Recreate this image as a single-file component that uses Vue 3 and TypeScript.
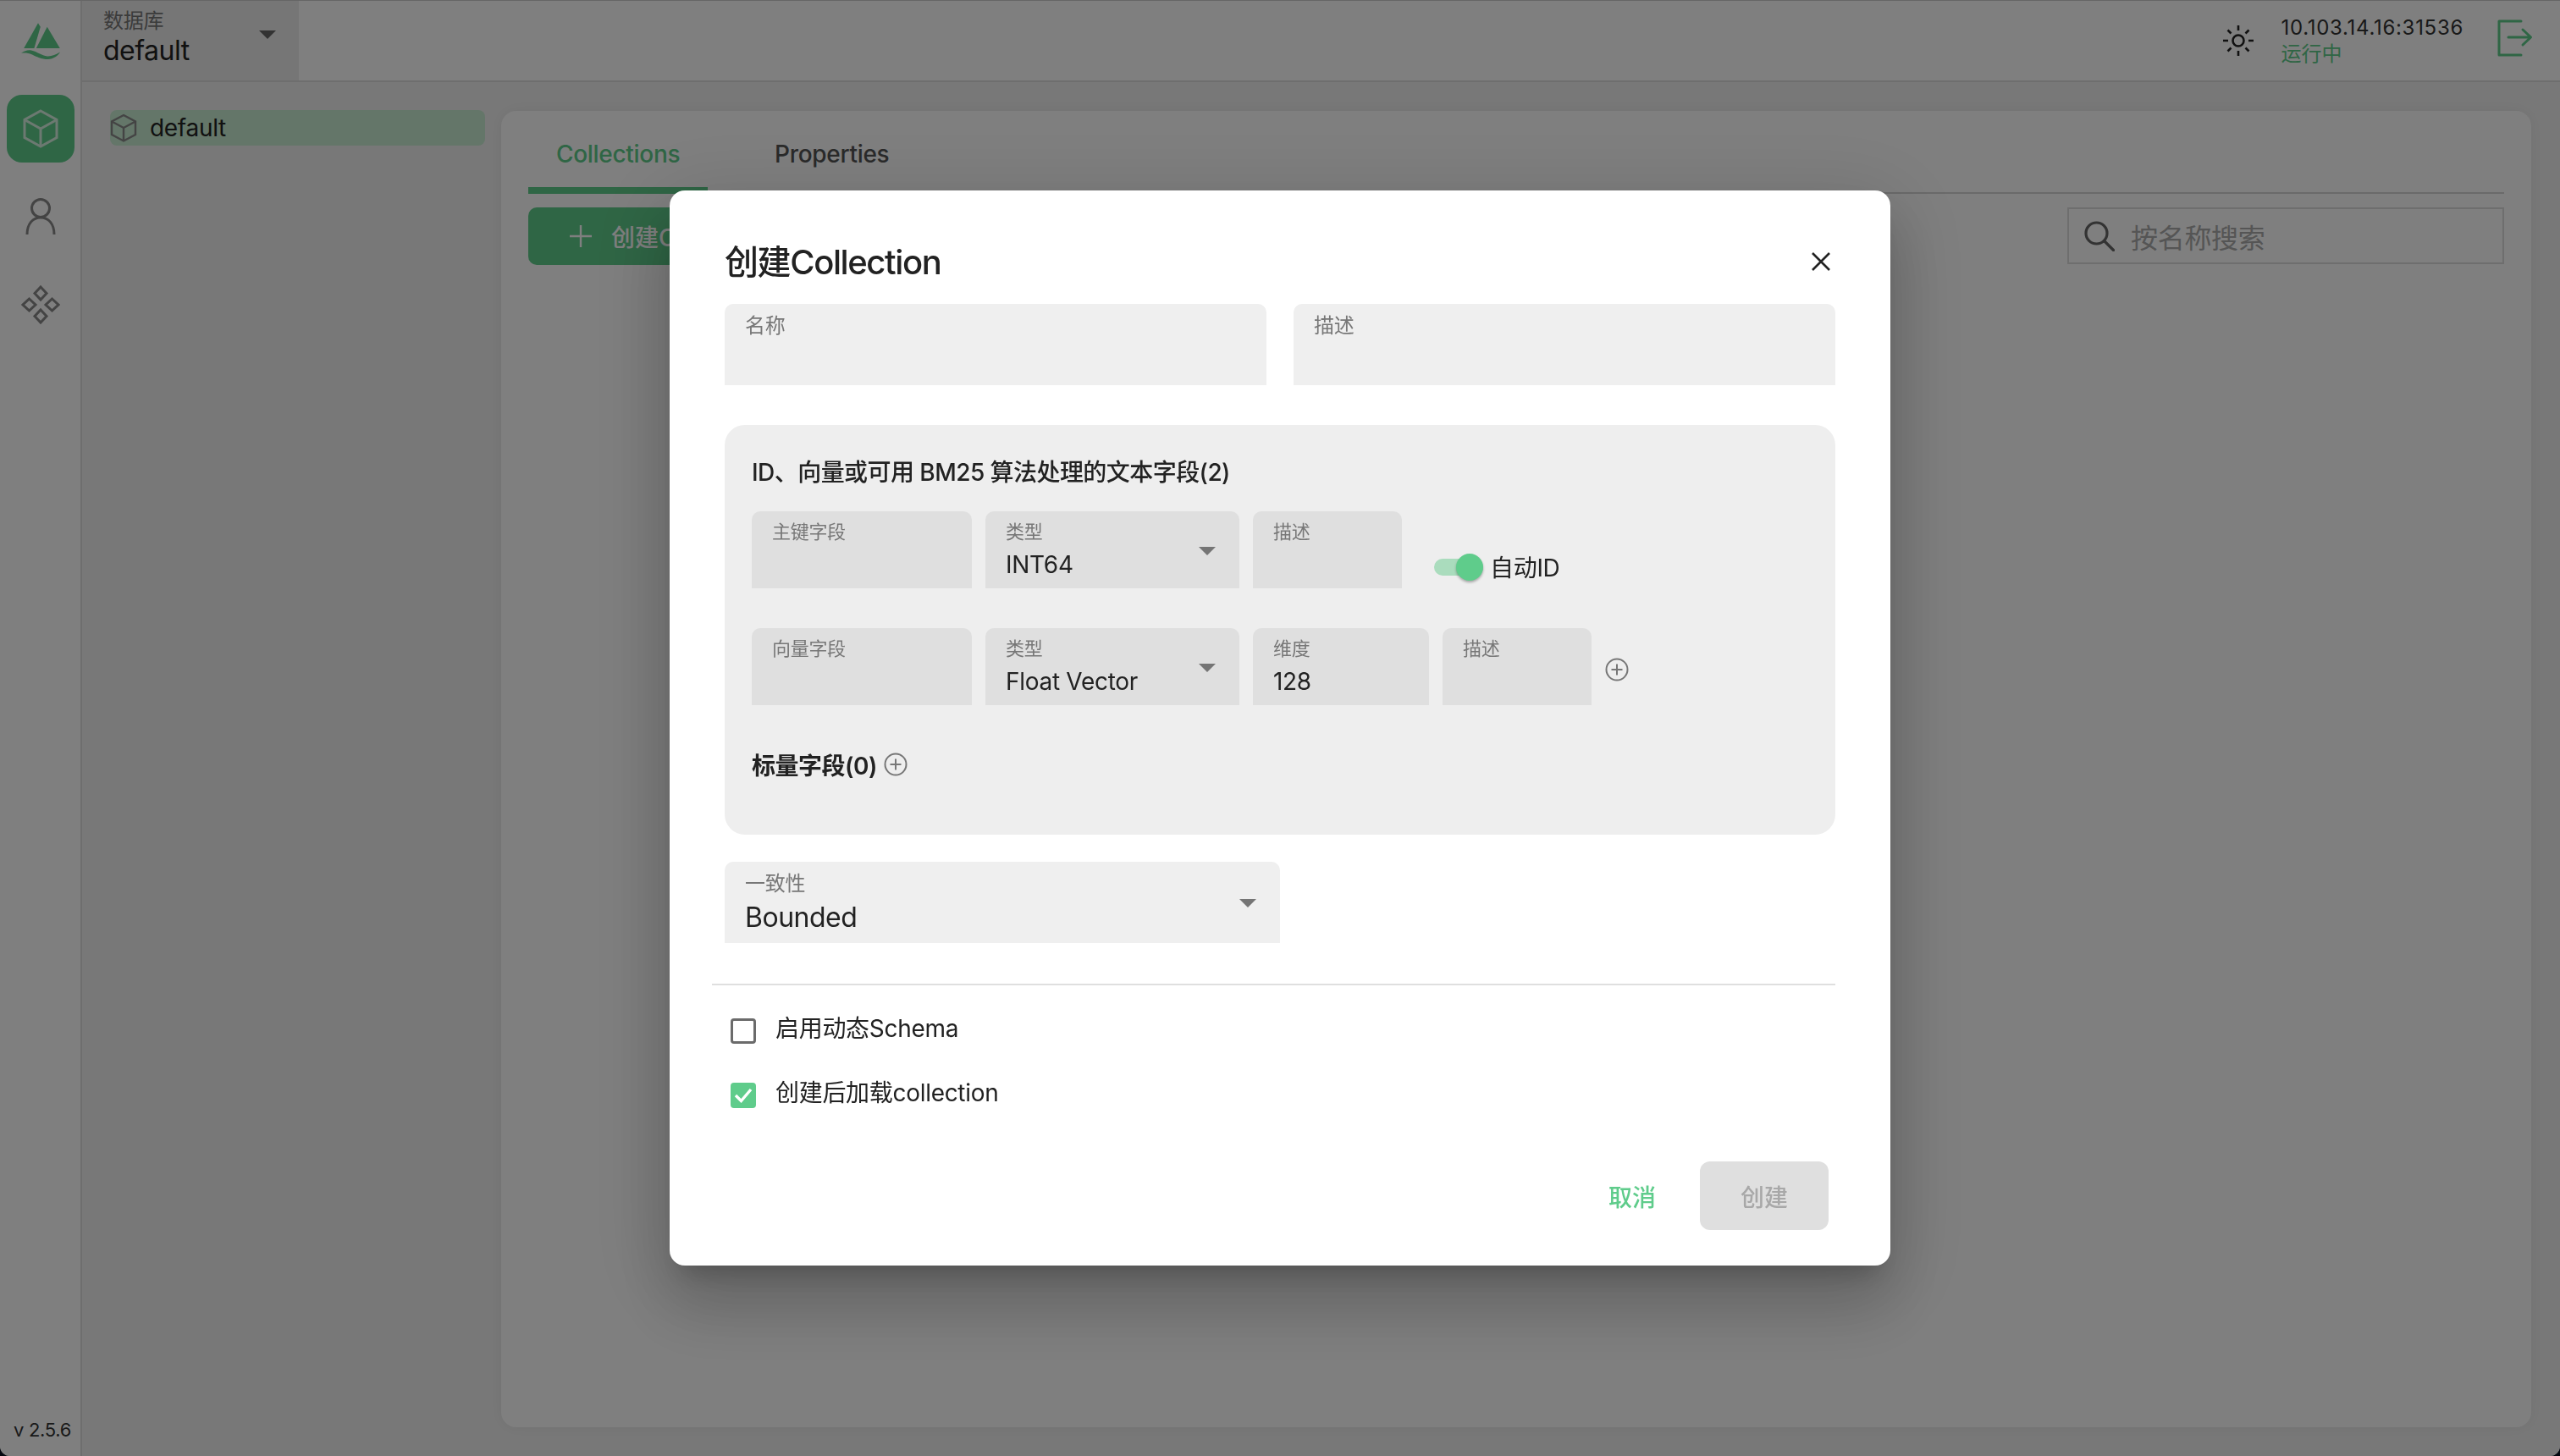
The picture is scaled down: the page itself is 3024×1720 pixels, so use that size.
<script setup lang="ts">
interface Field {
  label: string;
  value?: string;
  select?: boolean;
  cls: string;
}

const navItems = ['cube', 'user', 'diamonds'];

const pkRow: Field[] = [
  { label: '主键字段', cls: 'w-name' },
  { label: '类型', value: 'INT64', select: true, cls: 'w-type' },
  { label: '描述', cls: 'w-desc' },
];

const vectorRow: Field[] = [
  { label: '向量字段', cls: 'w-name' },
  { label: '类型', value: 'Float Vector', select: true, cls: 'w-type' },
  { label: '维度', value: '128', cls: 'w-dim' },
  { label: '描述', cls: 'w-desc' },
];
</script>

<template>
  <div class="app">
    <aside class="rail">
      <svg class="logo" viewBox="24 26 48 45">
        <path d="M45 27.3 L47.8 31.8 L40.4 57 H28.2 Z" />
        <path d="M55.7 31.7 L70.8 57 H42.8 Z" />
        <path d="M25 62.8 C29 60 33 58.8 37 59.6 C44 61 49 66 56 66.4 C61 66.6 66 65 71 61.6 C69 65.6 63 70 56.7 70 C49 70 43 66.8 38 64.4 C33 62.4 29 62.2 25 62.8 Z" />
      </svg>
      <nav class="nav">
        <div v-for="item in navItems" :key="item" class="nav-item" :class="{ active: item === 'cube' }">
          <svg v-if="item === 'cube'" width="46" height="46" viewBox="0 0 46 46" fill="none" stroke="currentColor" stroke-width="3">
            <path d="M23 2 L42 12.5 V33.5 L23 44 L4 33.5 V12.5 Z" />
            <path d="M4 12.5 L23 23 L42 12.5 M23 23 V44" />
          </svg>
          <svg v-else-if="item === 'user'" width="36" height="44" viewBox="0 0 36 44" fill="none" stroke="currentColor" stroke-width="3">
            <circle cx="18" cy="12" r="10.5" />
            <path d="M2 43 C2 30 9 23 18 23 C27 23 34 30 34 43" />
          </svg>
          <svg v-else width="46" height="46" viewBox="0 0 46 46" fill="none" stroke="currentColor" stroke-width="3">
            <path d="M23 2 L30 9.5 L23 17 L16 9.5 Z" />
            <path d="M23 29 L30 36.5 L23 44 L16 36.5 Z" />
            <path d="M9.5 16 L17 23 L9.5 30 L2 23 Z" />
            <path d="M36.5 16 L44 23 L36.5 30 L29 23 Z" />
          </svg>
        </div>
      </nav>
      <div class="version">v 2.5.6</div>
    </aside>

    <div class="main">
      <header class="topbar">
        <div class="db-select">
          <div class="db-text">
            <span class="db-label">数据库</span>
            <span class="db-value">default</span>
          </div>
          <i class="caret dark"></i>
        </div>
        <div class="top-right">
          <svg class="sun" width="36" height="36" viewBox="0 0 36 36" fill="none" stroke="currentColor" stroke-width="2.6">
            <circle cx="18" cy="18" r="6.5" />
            <path d="M18 0 V6 M18 30 V36 M0 18 H6 M30 18 H36 M5.5 5.5 L9.5 9.5 M26.5 26.5 L30.5 30.5 M30.5 5.5 L26.5 9.5 M9.5 26.5 L5.5 30.5" />
          </svg>
          <div class="address">
            <span>10.103.14.16:31536</span>
            <span class="running">运行中</span>
          </div>
          <svg class="logout" width="42" height="44" viewBox="0 0 42 44" fill="none" stroke="currentColor" stroke-width="3" stroke-linejoin="round" stroke-linecap="round">
            <path d="M28 2 H2 V42 H28" />
            <path d="M13 21 H39 M30 12 L39.5 21 L30 30" />
          </svg>
        </div>
      </header>

      <div class="body">
        <div class="tree">
          <div class="tree-item">
            <svg width="32" height="34" viewBox="0 0 32 34" fill="none" stroke="currentColor" stroke-width="2.4">
              <path d="M16 2 L30 9.5 V25 L16 32.5 L2 25 V9.5 Z" />
              <path d="M2 9.5 L16 17 L30 9.5 M16 17 V32.5" />
            </svg>
            <span>default</span>
          </div>
        </div>

        <section class="card">
          <div class="tabs">
            <div class="tab active">Collections</div>
            <div class="tab">Properties</div>
          </div>
          <div class="toolbar">
            <button class="create-btn">
              <svg width="26" height="26" viewBox="0 0 26 26" stroke="currentColor" stroke-width="2.4"><path d="M13 0 V26 M0 13 H26" /></svg>
              创建Collection
            </button>
            <div class="search">
              <svg width="36" height="36" viewBox="0 0 36 36" fill="none" stroke="currentColor" stroke-width="3.2" stroke-linecap="round">
                <circle cx="14.5" cy="14.5" r="12.5" />
                <path d="M24 24 L34.5 34.5" />
              </svg>
              <span>按名称搜索</span>
            </div>
          </div>
        </section>
      </div>
    </div>

    <div class="overlay">
      <div class="dialog">
        <div class="dialog-head">
          <h2>创建Collection</h2>
          <svg class="close" width="22" height="22" viewBox="0 0 22 22" stroke="currentColor" stroke-width="2.6"><path d="M1 1 L21 21 M21 1 L1 21" /></svg>
        </div>

        <div class="top-fields">
          <div class="field big"><label>名称</label></div>
          <div class="field big"><label>描述</label></div>
        </div>

        <div class="schema">
          <div class="schema-title">ID、向量或可用 BM25 算法处理的文本字段(2)</div>
          <div class="row">
            <div v-for="f in pkRow" :key="f.label" class="field small" :class="f.cls">
              <div class="field-text">
                <label>{{ f.label }}</label>
                <span v-if="f.value">{{ f.value }}</span>
              </div>
              <i v-if="f.select" class="caret"></i>
            </div>
            <div class="auto-id">
              <div class="switch"><b></b></div>
              <span>自动ID</span>
            </div>
          </div>
          <div class="row second">
            <div v-for="f in vectorRow" :key="f.label" class="field small" :class="f.cls">
              <div class="field-text">
                <label>{{ f.label }}</label>
                <span v-if="f.value">{{ f.value }}</span>
              </div>
              <i v-if="f.select" class="caret"></i>
            </div>
            <svg class="add add-row" width="28" height="28" viewBox="0 0 28 28" fill="none" stroke="currentColor" stroke-width="2">
              <circle cx="14" cy="14" r="12.5" />
              <path d="M14 7.5 V20.5 M7.5 14 H20.5" />
            </svg>
          </div>
          <div class="scalar">
            <span>标量字段(0)</span>
            <svg class="add" width="28" height="28" viewBox="0 0 28 28" fill="none" stroke="currentColor" stroke-width="2">
              <circle cx="14" cy="14" r="12.5" />
              <path d="M14 7.5 V20.5 M7.5 14 H20.5" />
            </svg>
          </div>
        </div>

        <div class="field big consistency">
          <div class="field-text">
            <label>一致性</label>
            <span>Bounded</span>
          </div>
          <i class="caret"></i>
        </div>

        <div class="divider"></div>

        <div class="check-row">
          <span class="box"></span>
          <span>启用动态Schema</span>
        </div>
        <div class="check-row">
          <span class="box checked">
            <svg width="22" height="18" viewBox="0 0 22 18" fill="none" stroke="#fff" stroke-width="3.4"><path d="M2 9 L8.5 15.5 L20 2" /></svg>
          </span>
          <span>创建后加载collection</span>
        </div>

        <div class="dialog-foot">
          <button class="cancel">取消</button>
          <button class="submit" disabled>创建</button>
        </div>
      </div>
    </div>
  </div>
</template>

<style>
html, body { background: #0b1020; }
</style>

<style scoped>
.app {
  --primary: #5fcc8b;
  display: flex;
  height: 1720px;
  overflow: hidden;
  background: #fff;
  border-top: 1px solid #ccc;
  border-radius: 0 0 12px 12px;
  box-sizing: border-box;
  color: #222;
  font-family: Inter, "Noto Sans CJK SC", sans-serif;
  letter-spacing: -0.3px;
}

/* left rail */
.rail {
  width: 97px;
  flex-shrink: 0;
  box-sizing: border-box;
  border-right: 2px solid #dcdcdc;
  display: flex;
  flex-direction: column;
  background: #fff;
}
.logo { width: 48px; height: 45px; margin: 25px 0 0 24px; fill: var(--primary); }
.nav { display: flex; flex-direction: column; gap: 24px; margin: 41px 0 0 8px; }
.nav-item {
  width: 80px;
  height: 80px;
  border-radius: 18px;
  display: flex;
  align-items: center;
  justify-content: center;
  color: #888;
}
.nav-item.active { background: var(--primary); color: #d8f3e2; }
.version { margin-top: auto; padding: 0 0 18px 16px; font-size: 22px; line-height: 26px; color: #333; }

.main { flex: 1; min-width: 0; display: flex; flex-direction: column; }

/* top bar */
.topbar {
  height: 96px;
  flex-shrink: 0;
  display: flex;
  justify-content: space-between;
  box-sizing: border-box;
  border-bottom: 2px solid #dcdcdc;
  background: #fff;
}
.db-select {
  width: 256px;
  box-sizing: border-box;
  padding: 0 27px 0 25px;
  display: flex;
  align-items: center;
  justify-content: space-between;
  background: #ececec;
}
.db-text { display: flex; flex-direction: column; margin-top: -6px; }
.db-label { font-size: 24px; line-height: 28px; color: #777; }
.db-value { font-size: 32px; line-height: 40px; margin-top: 1px; color: #222; letter-spacing: -0.5px; }

.top-right { display: flex; align-items: center; padding-right: 32px; }
.sun { color: #222; margin-right: 33px; }
.address {
  display: flex;
  flex-direction: column;
  font-size: 24px;
  line-height: 31px;
  margin-right: 40px;
  color: #333;
  letter-spacing: 0.7px;
}
.running { color: var(--primary); letter-spacing: 0; }
.logout { color: var(--primary); margin-top: -6px; }

/* page body */
.body { flex: 1; min-height: 0; display: flex; background: #f1f1f1; }
.tree { width: 495px; flex-shrink: 0; box-sizing: border-box; padding: 33px 19px 0 33px; }
.tree-item {
  height: 42px;
  display: flex;
  align-items: center;
  gap: 15px;
  border-radius: 8px;
  background: #c8ecd3;
  font-size: 28px;
  color: #222;
}
.tree-item svg { color: #888; }

.card {
  flex: 1;
  margin: 34px 34px 34px 0;
  padding: 0 32px;
  border-radius: 18px;
  background: #fff;
  box-shadow: 0 0 18px rgba(0, 0, 0, 0.06);
}
.tabs { height: 98px; box-sizing: border-box; display: flex; border-bottom: 2px solid #d4d4d4; }
.tab { height: 98px; box-sizing: border-box; padding: 32px 33px 0; font-size: 28px; line-height: 38px; font-weight: 500; color: #555; }
.tab + .tab { margin-left: 46px; }
.tab.active { width: 212px; color: var(--primary); border-bottom: 8px solid var(--primary); }

.toolbar { display: flex; justify-content: space-between; margin-top: 16px; }
.create-btn {
  height: 68px;
  display: flex;
  align-items: center;
  gap: 23px;
  padding: 0 40px 0 49px;
  border: none;
  border-radius: 10px;
  background: var(--primary);
  color: #fff;
  font: 500 28px Inter, "Noto Sans CJK SC", sans-serif;
}
.search {
  width: 516px;
  height: 67px;
  box-sizing: border-box;
  border: 2px solid #ddd;
  display: flex;
  align-items: center;
  gap: 19px;
  padding-left: 18px;
  font-size: 32px;
  color: #aaa;
}
.search svg { color: #666; }

/* dialog */
.overlay {
  position: fixed;
  inset: 0;
  display: flex;
  align-items: center;
  justify-content: center;
  background: rgba(0, 0, 0, 0.5);
}
.dialog {
  width: 1442px;
  height: 1270px;
  box-sizing: border-box;
  padding: 57px 65px 42px;
  display: flex;
  flex-direction: column;
  background: #fff;
  border-radius: 18px;
  box-shadow: 0 22px 30px -14px rgba(0, 0, 0, 0.2), 0 48px 76px 6px rgba(0, 0, 0, 0.14), 0 18px 92px 16px rgba(0, 0, 0, 0.12);
}
.dialog-head { height: 56px; display: flex; align-items: center; justify-content: space-between; padding-right: 6px; }
.dialog-head h2 { margin: 0; font-size: 40px; line-height: 56px; font-weight: 500; letter-spacing: -1.4px; color: #222; }
.close { color: #222; margin-top: -2px; }

.top-fields { display: flex; gap: 32px; margin-top: 21px; }
.top-fields .field { flex: 1; }

.field {
  box-sizing: border-box;
  padding-left: 24px;
  border-radius: 10px 10px 0 0;
  color: #222;
}
.field.big { height: 96px; padding-top: 14px; background: #efefef; }
.field.big label { font-size: 24px; line-height: 24px; }
.field.small {
  height: 91px;
  padding-top: 12px;
  background: #dfdfdf;
  font-size: 28px;
}
.field.small label { font-size: 22px; line-height: 24px; }
.field label { display: block; color: #777; }
.field-text span { display: block; margin-top: 9px; line-height: 36px; }

.w-name { width: 260px; }
.w-type { width: 300px; }
.w-desc { width: 176px; }
.w-dim { width: 208px; }

.w-type, .consistency { display: flex; justify-content: space-between; padding-right: 28px; }
.caret {
  align-self: center;
  width: 0;
  height: 0;
  border-left: 10px solid transparent;
  border-right: 10px solid transparent;
  border-top: 10px solid #757575;
}
.caret.dark { border-top-color: #666; margin-top: -14px; }
.w-type .caret { margin-top: -9px; }
.consistency .caret { margin-top: -12px; }

.schema {
  margin-top: 47px;
  height: 484px;
  box-sizing: border-box;
  padding: 36px 32px 0;
  border-radius: 24px;
  background: #eee;
}
.schema-title { font-size: 28px; line-height: 40px; font-weight: 500; letter-spacing: -0.55px; color: #222; }
.row { display: flex; gap: 16px; margin-top: 26px; }
.row.second { margin-top: 47px; }

.auto-id { display: flex; align-items: center; align-self: flex-start; gap: 8px; margin: 42px 0 0 22px; height: 48px; font-size: 28px; color: #222; }
.auto-id span { margin-top: -3px; }
.switch {
  width: 58px;
  height: 20px;
  display: flex;
  justify-content: flex-end;
  align-items: center;
  border-radius: 10px;
  background: #aadcbd;
}
.switch b {
  width: 32px;
  height: 32px;
  border-radius: 50%;
  background: var(--primary);
  box-shadow: 0 2px 3px rgba(0, 0, 0, 0.3);
}
.add { color: #777; flex-shrink: 0; }
.add-row { align-self: center; margin-top: 7px; }

.scalar { display: flex; align-items: center; gap: 8px; height: 40px; margin-top: 50px; font-size: 28px; font-weight: 600; letter-spacing: -0.5px; color: #222; }

.consistency { width: 656px; margin-top: 32px; }
.consistency .field-text span { margin-top: 8px; font-size: 32px; line-height: 40px; letter-spacing: -0.5px; }

.divider { height: 2px; margin: 48px 0 16px -15px; background: #dfdfdf; }

.check-row { height: 76px; display: flex; align-items: center; gap: 23px; padding-left: 7px; font-size: 28px; color: #222; }
.check-row > span:last-child { margin-top: -10px; }
.box {
  width: 30px;
  height: 30px;
  box-sizing: border-box;
  border: 3px solid #6b6b6b;
  border-radius: 4px;
  display: flex;
  align-items: center;
  justify-content: center;
}
.box.checked { border: none; background: var(--primary); }

.dialog-foot { display: flex; justify-content: flex-end; align-items: center; gap: 52px; margin-top: 40px; padding-right: 8px; }
.dialog-foot button { border: none; font: 500 28px Inter, "Noto Sans CJK SC", sans-serif; }
.cancel { padding: 0; background: none; color: var(--primary); }
.submit { width: 152px; height: 81px; border-radius: 12px; background: #dfdfdf; color: #a8a8a8; }
</style>
